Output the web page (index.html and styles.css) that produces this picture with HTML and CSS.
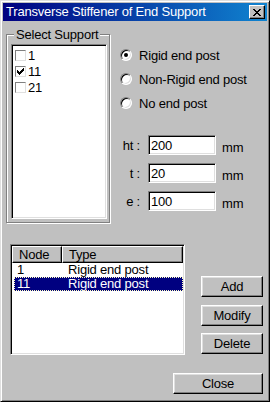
FILE: index.html
```html
<!DOCTYPE html>
<html lang="en">
<head>
<meta charset="UTF-8">
<title>Transverse Stiffener of End Support</title>
<link rel="stylesheet" href="styles.css">
</head>
<body>
<section class="window">
	<header class="titlebar">
		<span class="title">Transverse Stiffener of End Support</span>
		<a href="javascript:;" class="closeX">
			<svg width="8" height="7" viewBox="0 0 8 7" shape-rendering="crispEdges">
				<path d="M0 0h2v1h-2zM6 0h2v1h-2zM1 1h2v1h-2zM5 1h2v1h-2zM2 2h4v1h-4zM3 3h2v1h-2zM2 4h4v1h-4zM1 5h2v1h-2zM5 5h2v1h-2zM0 6h2v1h-2zM6 6h2v1h-2z" fill="#000"/>
			</svg>
		</a>
	</header>
	<div class="client">
		<div class="top">
			<fieldset class="group">
				<legend>Select Support</legend>
				<ul class="checkList">
					<li><span class="chk"></span>1</li>
					<li><span class="chk"><svg width="7" height="7" viewBox="0 0 7 7" shape-rendering="crispEdges"><path d="M0 2h1v3h-1zM1 3h1v3h-1zM2 4h1v3h-1zM3 3h1v3h-1zM4 2h1v3h-1zM5 1h1v3h-1zM6 0h1v3h-1z" fill="#000"/></svg></span>11</li>
					<li><span class="chk"></span>21</li>
				</ul>
			</fieldset>
			<div class="options">
				<ul class="radios">
					<li><span class="radio on"></span>Rigid end post</li>
					<li><span class="radio"></span>Non-Rigid end post</li>
					<li><span class="radio"></span>No end post</li>
				</ul>
				<div class="fields">
					<div class="field"><label>ht :</label><input type="text" value="200"><span class="unit">mm</span></div>
					<div class="field"><label>t :</label><input type="text" value="20"><span class="unit">mm</span></div>
					<div class="field"><label>e :</label><input type="text" value="100"><span class="unit">mm</span></div>
				</div>
			</div>
		</div>
		<div class="bottom">
			<div class="listview">
				<div class="lvHead">
					<span class="colNode">Node</span>
					<span class="colType">Type</span>
				</div>
				<ul class="lvBody">
					<li class="lvRow"><span class="cellNode">1</span><span class="cellType">Rigid end post</span></li>
					<li class="lvRow selected"><span class="cellNode">11</span><span class="cellType">Rigid end post</span></li>
				</ul>
			</div>
			<div class="btns">
				<button type="button" class="btn">Add</button>
				<button type="button" class="btn modify">Modify</button>
				<button type="button" class="btn delete">Delete</button>
			</div>
		</div>
		<div class="footer">
			<button type="button" class="btn close">Close</button>
		</div>
	</div>
</section>
</body>
</html>
```
FILE: styles.css
```css
html,
body {
	margin: 0;
}
body {
	width: 270px;
	height: 402px;
	background: #c0c0c0;
	color: #000;
	font: 13px "Liberation Sans", Arial, sans-serif;
	letter-spacing: -0.2px;
}
ul {
	margin: 0;
	padding: 0;
	list-style: none;
}
.window {
	box-sizing: border-box;
	display: flex;
	flex-direction: column;
	width: 270px;
	height: 402px;
	padding: 2px;
	background: #c0c0c0;
	border: 1px solid;
	border-color: #dfdfdf #000 #000 #dfdfdf;
	box-shadow: inset 1px 1px #fff, inset -1px -1px #808080;
}
.titlebar {
	display: flex;
	align-items: center;
	height: 18px;
	padding-left: 3px;
	color: #fff;
	background: linear-gradient(to right, #000080, #1084d0);
}
.title {
	flex: 1;
	line-height: 18px;
}
.closeX {
	box-sizing: border-box;
	display: flex;
	align-items: center;
	justify-content: center;
	width: 16px;
	height: 14px;
	margin-right: 2px;
	background: #c0c0c0;
	border: 1px solid;
	border-color: #fff #000 #000 #fff;
	box-shadow: inset -1px -1px #808080;
}
.client {
	flex: 1;
	display: flex;
	flex-direction: column;
}
.top {
	display: flex;
	align-items: flex-start;
	height: 202px;
}
.group {
	box-sizing: border-box;
	width: 104px;
	min-inline-size: 0;
	margin: 6px 0 0 3px;
	padding: 2px 2px 3px 4px;
	border: 1px solid #808080;
	box-shadow: inset 1px 1px #fff, 1px 1px #fff;
}
.group legend {
	margin-left: 3px;
	padding: 0 2px;
	line-height: 15px;
	background: #c0c0c0;
}
.checkList {
	box-sizing: border-box;
	height: 175px;
	padding: 2px 0 0 3px;
	background: #fff;
	border: 1px solid;
	border-color: #808080 #fff #fff #808080;
	box-shadow: inset 1px 1px #000, inset -1px -1px #dfdfdf;
}
.checkList li {
	display: flex;
	align-items: center;
	height: 16px;
}
.chk {
	box-sizing: border-box;
	display: flex;
	align-items: center;
	justify-content: center;
	width: 11px;
	height: 11px;
	margin-right: 2px;
	background: #fff;
	border: 1px solid;
	border-color: #808080 #dfdfdf #dfdfdf #808080;
}
.options {
	margin-top: 22px;
	padding-left: 10px;
}
.radios li {
	display: flex;
	align-items: center;
	height: 24px;
}
.radio {
	box-sizing: border-box;
	display: flex;
	align-items: center;
	justify-content: center;
	width: 12px;
	height: 12px;
	margin-right: 7px;
	border-radius: 50%;
	background: #fff;
	border: 1px solid;
	border-color: #808080 #fff #fff #808080;
	box-shadow: inset 1px 1px #000, inset -1px -1px #dfdfdf;
}
.radio.on::after {
	content: "";
	width: 4px;
	height: 4px;
	border-radius: 50%;
	background: #000;
}
.fields {
	display: flex;
	flex-direction: column;
	gap: 8px;
	margin-top: 20px;
}
.field {
	display: flex;
	align-items: center;
	height: 20px;
}
.field label {
	width: 20px;
	margin-right: 8px;
	text-align: right;
	white-space: nowrap;
}
.field input {
	box-sizing: border-box;
	width: 68px;
	height: 20px;
	margin: 0;
	padding: 0 2px;
	font: inherit;
	letter-spacing: inherit;
	color: #000;
	background: #fff;
	outline: none;
	border: 1px solid;
	border-color: #808080 #fff #fff #808080;
	box-shadow: inset 1px 1px #000, inset -1px -1px #dfdfdf;
}
.unit {
	align-self: flex-end;
	margin-left: 6px;
	line-height: 15px;
}
.bottom {
	display: flex;
	align-items: flex-start;
	margin-top: 21px;
}
.listview {
	box-sizing: border-box;
	width: 175px;
	height: 111px;
	margin-left: 7px;
	padding: 1px;
	background: #fff;
	border: 1px solid;
	border-color: #808080 #fff #fff #808080;
	box-shadow: inset 1px 1px #000, inset -1px -1px #dfdfdf;
}
.lvHead {
	display: flex;
	height: 17px;
}
.lvHead span {
	box-sizing: border-box;
	padding-left: 6px;
	line-height: 15px;
	background: #c0c0c0;
	border: 1px solid;
	border-color: #fff #000 #000 #fff;
	box-shadow: inset -1px -1px #808080;
}
.colNode {
	width: 50px;
}
.colType {
	width: 121px;
}
.lvRow {
	box-sizing: border-box;
	display: flex;
	height: 14px;
	margin-left: 2px;
	line-height: 14px;
}
.cellNode {
	width: 48px;
	padding-left: 3px;
	box-sizing: border-box;
}
.cellType {
	padding-left: 6px;
}
.lvRow.selected {
	color: #fff;
	background: #000080;
	outline: 1px dotted #ffffc0;
	outline-offset: -1px;
}
.btns {
	display: flex;
	flex-direction: column;
	margin-left: 16px;
	padding-top: 32px;
}
.btn {
	box-sizing: border-box;
	width: 62px;
	height: 21px;
	margin: 0;
	padding: 0;
	font: inherit;
	letter-spacing: inherit;
	color: #000;
	background: #c0c0c0;
	border: 1px solid;
	border-color: #fff #000 #000 #fff;
	box-shadow: inset -1px -1px #808080, inset 1px 1px #dfdfdf;
}
.modify {
	margin-top: 8px;
}
.delete {
	margin-top: 7px;
}
.footer {
	display: flex;
	justify-content: flex-end;
	margin-top: 18px;
	padding-right: 4px;
}
.close {
	width: 90px;
}
```
